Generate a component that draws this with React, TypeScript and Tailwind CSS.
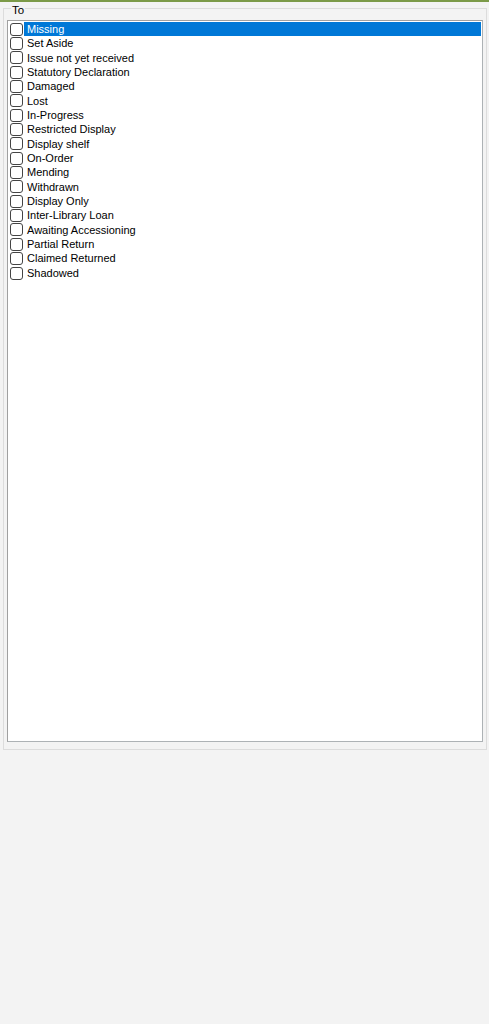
const statuses = [
  "Missing",
  "Set Aside",
  "Issue not yet received",
  "Statutory Declaration",
  "Damaged",
  "Lost",
  "In-Progress",
  "Restricted Display",
  "Display shelf",
  "On-Order",
  "Mending",
  "Withdrawn",
  "Display Only",
  "Inter-Library Loan",
  "Awaiting Accessioning",
  "Partial Return",
  "Claimed Returned",
  "Shadowed",
];

export default function App() {
  return (
    <div
      className="w-[489px] h-[1024px] bg-[#f3f3f3] overflow-hidden"
      style={{ fontFamily: '"Liberation Sans", Arial, sans-serif' }}
    >
      <div className="h-[2px] bg-[#7b9a48]" />
      {/* group box */}
      <div className="relative ml-[3px] mr-[2px] mt-[6px] h-[742px] border border-[#dcdcdc]">
        <span className="absolute left-[7px] top-[-5px] bg-[#f3f3f3] px-[1px] text-[11.5px] leading-[12px] text-black">
          To
        </span>
        <div className="ml-[3px] mr-[3px] mt-[11px] h-[722px] bg-white border border-[#a0a0a0] border-b-[#adb2b5] border-r-[#adb2b5] pt-[1px] pl-[2px] pr-[1px]">
          {statuses.map((s, i) => (
            <div key={s} className="flex items-center h-[14.35px]">
              <div className="w-[13px] h-[13px] shrink-0 rounded-[3px] border border-[#444444] bg-white" />
              <div
                className={
                  i === 0
                    ? "flex-1 ml-[1px] h-[14px] flex items-center bg-[#0078d7] text-white pl-[3px] text-[11px]"
                    : "flex-1 ml-[1px] h-[14px] flex items-center text-black pl-[3px] text-[11px]"
                }
              >
                {s}
              </div>
            </div>
          ))}
        </div>
      </div>
    </div>
  );
}
